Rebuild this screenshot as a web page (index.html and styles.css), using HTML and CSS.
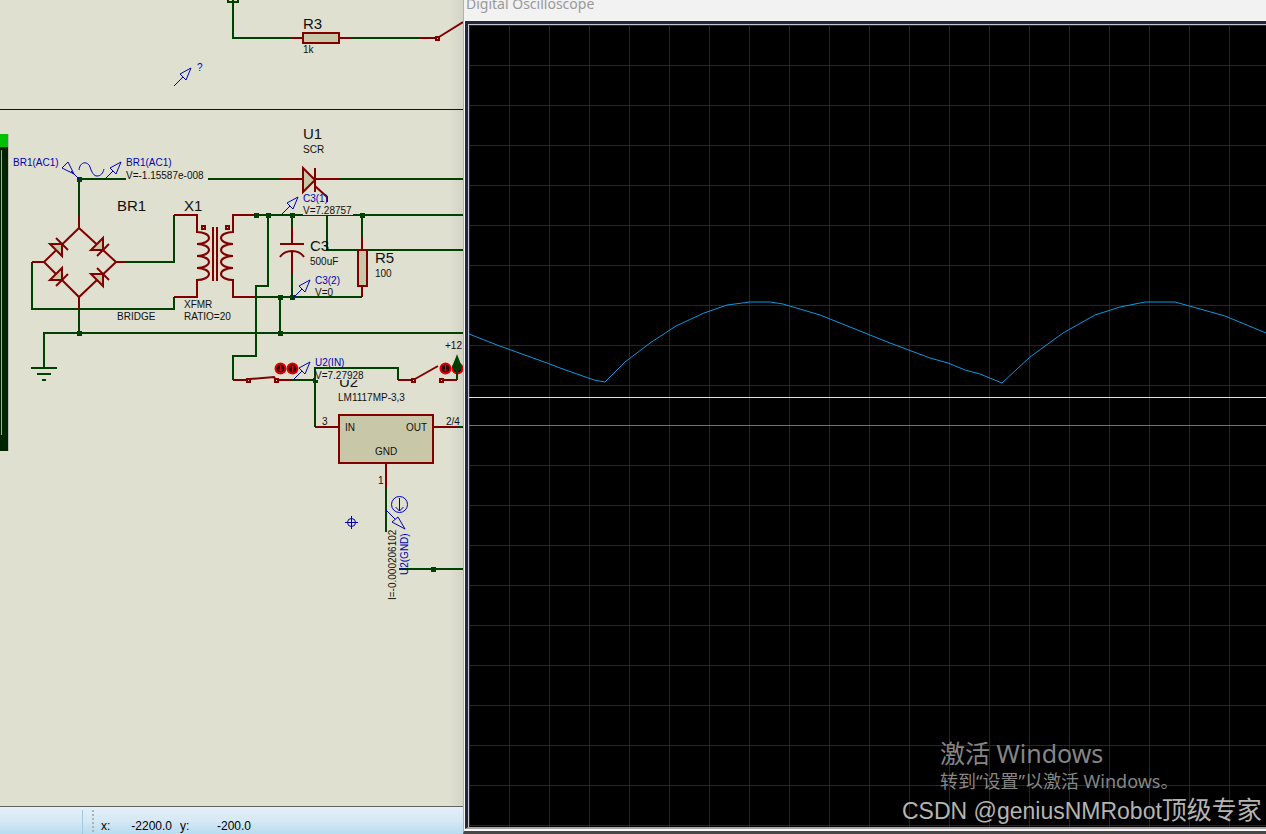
FILE: index.html
```html
<!DOCTYPE html>
<html lang="zh-CN">
  <head>
    <meta charset="UTF-8" />
    <meta name="viewport" content="width=device-width, initial-scale=1.0" />
    <title>Digital Oscilloscope</title>
    <link rel="stylesheet" href="styles.css">
  </head>

  <body>
    <div class="workspace">
      <section class="editor">
        <div class="sheet">
          <svg class="schematic" width="463" height="806" role="img" aria-label="Schematic">
            <defs>
              <g id="probe">
                <path d="M0 0 L9 -9 M17 -18 L6 -12 L12 -6 Z" />
              </g>
              <g id="diode-up">
                <path class="body" d="M0 0 H-12 L0 12 Z" />
                <path d="M-6 -6 L6 6" />
              </g>
              <g id="diode-down">
                <path class="body" d="M0 0 H-12 L0 -12 Z" />
                <path d="M-6 6 L6 -6" />
              </g>
              <g id="node">
                <rect x="-3" y="-2" width="5" height="5" />
              </g>
              <g id="contact">
                <rect x="-2" y="-1" width="3" height="3" />
              </g>
            </defs>

            <!-- Sheet border -->
            <path class="border" d="M0 109.5 H463" />

            <!-- Part on the left edge -->
            <rect x="0" y="134" width="8" height="317" fill="#002400" />
            <rect x="0" y="134" width="8" height="13" fill="#00c000" />
            <path d="M1.5 150 V435" stroke="#a0b0a0" />
            <path d="M8.5 134 V451" stroke="#bdbdb4" />

            <!-- Wires -->
            <g class="wire">
              <rect x="228" y="-4" width="10" height="6" />
              <path d="M233 0 V38 H292 M352 38 H420" />
              <path d="M79 215 V179 H126 M208 179 H280 M339 179 H463" />
              <path d="M174 215 V262 H126 M32 262 V309 H174 V297" />
              <path d="M79 309 V333 M44 368 V333 H463" />
              <path d="M31 368 H57 M37 374 H51 M42 380 H46" />
              <path d="M253 215 H463 M268 215 V286 H256 V356 H233 V380" />
              <path d="M292 215 V227 M292 274 V297 M256 297 H362 M280 297 V333" />
              <path d="M327 215 V250 H463 M362 215 V238" />
              <path d="M292 380 H315 M315 427 V368 H398 V380" />
              <path d="M457 427 H463 M386 487 V532 M399 569 H463" />
            </g>

            <!-- Parts -->
            <g class="part">
              <path d="M292 38 H303 M339 38 H352 M420 38 H436 M439 37 L463 22" />
              <rect class="body" x="303" y="33" width="36" height="10" />
              <path d="M280 179 H303 M315 179 H339" />
              <path class="body" d="M303 168 V192 L315 180 Z" />
              <path d="M315 168 V192 M315 186 L327 197 V202" />

              <path d="M79 215 V228 L116 262 L79 297 L44 262 L79 228 M32 262 H44 M116 262 H126 M79 297 V309" />
              <use href="#diode-up" x="62" y="244" />
              <use href="#diode-down" x="103" y="250" />
              <use href="#diode-down" x="62" y="280" />
              <use href="#diode-up" x="103" y="274" />

              <path d="M174 215 H197 V232 a12 6 0 0 1 0 12 a12 6 0 0 1 0 12 a12 6 0 0 1 0 12 a12 6 0 0 1 0 12 V297 H174" />
              <path d="M253 215 H233 V232 a12 6 0 0 0 0 12 a12 6 0 0 0 0 12 a12 6 0 0 0 0 12 a12 6 0 0 0 0 12 V297 H256" />
              <path d="M213 227 V281 M217 227 V281" />
              <use href="#contact" x="204" y="227" />
              <use href="#contact" x="228" y="227" />

              <path d="M292 227 V244 M280 244 H304 M280 257 Q284 251 292 251 Q300 251 304 257 M292 251 V274" />
              <path d="M362 238 V250 M362 286 V297" />
              <rect class="body" x="358" y="250" width="9" height="36" />

              <path d="M233 380 H247 M250 379 L274 377 L276 380 M278 380 H292" />
              <use href="#contact" x="249" y="380" />
              <use href="#contact" x="277" y="380" />
              <path d="M398 380 H412 M415 379 L438 366 M443 380 H457" />
              <use href="#contact" x="414" y="380" />
              <use href="#contact" x="442" y="380" />
              <use href="#contact" x="438" y="38" />

              <rect class="body" x="339" y="415" width="94" height="48" />
              <path d="M315 427 H339 M433 427 H457 M386 463 V487" />
            </g>

            <!-- Junctions -->
            <g class="junction">
              <use href="#node" x="80" y="179" />
              <use href="#node" x="80" y="333" />
              <use href="#node" x="257" y="215" />
              <use href="#node" x="269" y="215" />
              <use href="#node" x="293" y="215" />
              <use href="#node" x="363" y="215" />
              <use href="#node" x="281" y="297" />
              <use href="#node" x="293" y="297" />
              <use href="#node" x="281" y="333" />
              <use href="#node" x="316" y="380" />
              <use href="#node" x="434" y="569" />
            </g>

            <!-- Switch buttons -->
            <g class="toggle">
              <circle cx="280.5" cy="368.5" r="5" />
              <circle cx="292.5" cy="368.5" r="5" />
              <circle cx="445.5" cy="368.5" r="5" />
              <circle cx="457.5" cy="368.5" r="5" />
              <path d="M280.5 365 V371 M278.5 369 L280.5 371 L282.5 369" />
              <path d="M292.5 372 V366 M290.5 368 L292.5 366 L294.5 368" />
              <path d="M445.5 365 V371 M443.5 369 L445.5 371 L447.5 369" />
            </g>
            <g class="wire">
              <path d="M457 380 V358" />
              <path class="power" d="M457 357 L453 367 L457 371 L461 367 Z" />
            </g>

            <!-- Part names and values, the reading of U2 lies over its name -->
            <g class="name">
              <text x="303" y="29">R3</text>
              <text x="303" y="139">U1</text>
              <text x="117" y="211">BR1</text>
              <text x="184" y="211">X1</text>
              <text x="310" y="251">C3</text>
              <text x="375" y="263">R5</text>
              <text x="339" y="387">U2</text>
            </g>
            <g class="value">
              <text x="303" y="53">1k</text>
              <text x="303" y="153">SCR</text>
              <text x="117" y="320">BRIDGE</text>
              <text x="184" y="308">XFMR</text>
              <text x="184" y="320">RATIO=20</text>
              <text x="310" y="265">500uF</text>
              <text x="375" y="277">100</text>
              <text x="445" y="349">+12</text>
              <text x="338" y="401">LM1117MP-3,3</text>
              <text x="322" y="425">3</text>
              <text x="345" y="431">IN</text>
              <text x="406" y="431">OUT</text>
              <text x="446" y="425">2/4</text>
              <text x="375" y="455">GND</text>
              <text x="378" y="484">1</text>
            </g>

            <!-- Probe readings -->
            <g class="plate">
              <rect x="303" y="205" width="50" height="10" />
              <rect x="316" y="369" width="47" height="11" />
            </g>
            <g class="value">
              <text x="126" y="179">V=-1.15587e-008</text>
              <text x="303" y="214">V=7.28757</text>
              <text x="315" y="296">V=0</text>
              <text x="315" y="379">V=7.27928</text>
              <text transform="translate(396 600) rotate(-90)">I=-0.000206102</text>
            </g>
            <g class="probe-name">
              <text x="197" y="71">?</text>
              <text x="13" y="166">BR1(AC1)</text>
              <text x="126" y="166">BR1(AC1)</text>
              <text x="303" y="202">C3(1)</text>
              <text x="315" y="284">C3(2)</text>
              <text x="315" y="366">U2(IN)</text>
              <text transform="translate(408 575) rotate(-90)">U2(GND)</text>
            </g>
            <g class="probe">
              <use href="#probe" x="174" y="86" />
              <use href="#probe" x="104" y="180" />
              <use href="#probe" x="281" y="215" />
              <use href="#probe" x="293" y="298" />
              <use href="#probe" x="293" y="380" />
              <path d="M68 162 L62 168 L74 174 Z M71 171 L79 179" />
              <path d="M79 170 C80 161 88 161 90 167 C92 173 94 176 97 176 C101 176 103 173 104 169" />
              <path d="M386 510 L395 519 M398 517 L392 522 L405 529 Z" />
              <circle cx="399.5" cy="504.5" r="8" />
              <path d="M399.5 498 V511 M395.5 507 L399.5 511 L403.5 507" />
              <circle cx="351.5" cy="522.5" r="4" />
              <path d="M345 522.5 H358 M351.5 516 V529" />
            </g>
          </svg>
        </div>

        <footer class="status">
          <div class="status-message"></div>
          <div class="grip"></div>
          <div class="coord coord-x"><span>x:</span><span>-2200.0</span></div>
          <div class="coord coord-y"><span>y:</span><span>-200.0</span></div>
        </footer>
      </section>

      <main class="scope">
        <h1 class="scope-title">Digital Oscilloscope</h1>
        <div class="screen">
          <svg class="traces" role="img" aria-label="Channel traces">
            <path class="trace-b" d="M0 372.5 H4000" />
            <path class="trace-c" d="M0 400.5 H4000" />
            <polyline class="trace-a" points="0,309 28,320 78,338 91,343 125,355 136,357 156,337 181,318 207,301 235,288 258,280 281,277 301,277 314,279 351,290 376,300 391,306 421,318 461,333 479,338 496,345 511,349 533,358 561,332 594,308 626,290 651,282 676,277 706,277 724,282 756,291 797,308" />
          </svg>
        </div>
      </main>
    </div>

    <div class="overlay">
      <p class="activate">激活 Windows</p>
      <p class="activate-hint">转到“设置”以激活 Windows。</p>
      <p class="signature">CSDN @geniusNMRobot<span class="signature-title">顶级专家</span></p>
    </div>
  </body>
</html>
```
FILE: styles.css
```css
body {
  margin: 0;
  font-family: "Liberation Sans", Arial, sans-serif;
  background-color: #dfe0d0;
}

.workspace {
  display: grid;
  grid-template-columns: 463px 1fr;
  height: 100vh;
  min-height: 600px;
}

/* Schematic editor */
.editor {
  display: flex;
  flex-direction: column;
  min-width: 0;
  min-height: 0;
}

.sheet {
  flex: 1;
  min-height: 0;
  overflow: hidden;
  background: linear-gradient(to left, #d3d4c5, #dfe0d0 14px);
}

.schematic {
  display: block;
  fill: none;
}

.border {
  stroke: #0000a0;
}

.wire {
  stroke: #004000;
  stroke-width: 2;
}

.power {
  fill: #004000;
  fill-opacity: 0.8;
}

.part {
  stroke: #800000;
  stroke-width: 2;
}

.body {
  fill: #c8c8a8;
}

.junction {
  fill: #004000;
}

.toggle {
  fill: #300000;
  stroke: #e80000;
  stroke-width: 2;
}

.toggle path {
  fill: none;
  stroke-width: 1;
}

.plate {
  fill: #dfe0d0;
}

.name,
.value {
  fill: #101010;
  font-size: 10px;
}

.name {
  font-size: 15px;
}

.probe-name {
  fill: #0000b8;
  font-size: 10px;
}

.probe {
  stroke: #0000b8;
}

/* Status bar */
.status {
  display: flex;
  height: 27px;
  border-top: 1px solid #606468;
  background: linear-gradient(#e4eff7, #d6e9f5 50%, #b8dcf0);
  font-size: 12px;
  line-height: 16px;
  color: #000;
}

.status-message {
  width: 82px;
  margin-top: 3px;
  border-right: 1px solid #a4c8de;
}

.grip {
  width: 2px;
  margin: 3px 7px 0 9px;
  background: repeating-linear-gradient(#a8b4bc 0 2px, transparent 2px 4px);
}

.coord {
  display: flex;
  justify-content: space-between;
  padding-top: 11px;
}

.coord-x {
  width: 71px;
}

.coord-y {
  width: 71px;
  margin-left: 8px;
}

/* Oscilloscope window */
.scope {
  display: flex;
  flex-direction: column;
  min-width: 0;
  box-sizing: border-box;
  border-left: 1px solid #b0b0b0;
  border-bottom: 3px solid #484848;
  background-color: #f8f8f8;
}

.scope-title {
  height: 20px;
  margin: 0;
  padding-left: 2px;
  overflow: hidden;
  background-color: #f2f2f2;
  color: #999;
  font-family: "Noto Sans", "Open Sans", sans-serif;
  font-size: 14px;
  font-weight: normal;
  line-height: 8px;
}

.screen {
  flex: 1;
  min-height: 0;
  margin: 1px 0 2px 1px;
  border: solid #25253f;
  border-width: 3px 0 0 3px;
  border-bottom: 2px solid #a9a4a6;
  box-shadow: inset 1px 1px 0 #c4c8cc;
  padding: 1px 0 0 1px;
  background-color: #000;
  background-image:
    linear-gradient(#004008 1px, transparent 1px),
    linear-gradient(to right, #004008 1px, transparent 1px);
  background-size: 40px 40px;
  background-origin: content-box;
}

.traces {
  display: block;
  width: 100%;
  height: 100%;
  fill: none;
}

.trace-a {
  stroke: #0898e0;
}

.trace-b {
  stroke: #ffff00;
}

.trace-c {
  stroke: #c84868;
}

/* Text over the desktop */
.overlay {
  position: absolute;
  right: 4px;
  bottom: 6px;
  width: 360px;
  color: #868686;
  font-family: "Noto Sans", "Noto Sans CJK SC", sans-serif;
  white-space: nowrap;
}

.overlay p {
  margin: 0;
}

.activate {
  padding-left: 38px;
  font-size: 25px;
  line-height: 32px;
}

.activate-hint {
  padding-left: 38px;
  font-size: 18px;
  line-height: 24px;
}

.overlay .signature {
  color: #b4b4b4;
  font-family: "Liberation Sans", "Noto Sans CJK SC", sans-serif;
  font-size: 23px;
  line-height: 34px;
}

.signature-title {
  font-size: 25px;
}
```
